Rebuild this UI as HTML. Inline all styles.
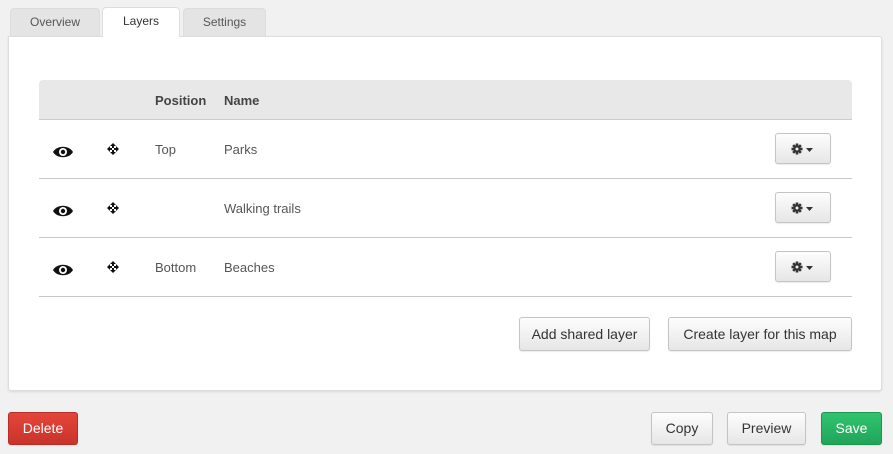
<!DOCTYPE html>
<html><head><style>
*{box-sizing:border-box;margin:0;padding:0}
body{width:893px;height:454px;background:#f1f1f1;font-family:"Liberation Sans",sans-serif;font-size:13px;color:#555;position:relative;overflow:hidden}
.abs{position:absolute}
.tab{position:absolute;top:8px;height:28px;background:#e4e4e4;border:1px solid #ddd;border-bottom:none;border-radius:4px 4px 0 0;text-align:center;line-height:27px;font-size:12px;color:#555}
.panel{position:absolute;left:8px;top:36px;width:874px;height:355px;background:#fff;border:1px solid #ddd;border-radius:0 3px 3px 3px;box-shadow:0 1px 2px rgba(0,0,0,.1)}
.th{position:absolute;left:39px;top:80px;width:813px;height:40px;background:#e8e8e8;border-radius:4px 4px 0 0;border-bottom:1px solid #ccc;font-weight:bold;color:#444}
.row{position:absolute;left:39px;width:813px;height:59px;border-bottom:1px solid #c8c8c8}
.btn{position:absolute;background:linear-gradient(#fdfdfd,#e6e6e6);border:1px solid #c4c4c4;border-radius:3px;text-align:center;color:#333;font-size:14px;box-shadow:0 1px 1px rgba(0,0,0,.08)}
</style></head><body>
<div class="tab" style="left:10px;width:90px">Overview</div>
<div class="tab" style="left:102px;width:78px;top:7px;height:30px;background:#fff;z-index:2;color:#333">Layers</div>
<div class="tab" style="left:183px;width:83px">Settings</div>
<div class="panel"></div>
<div class="th"><span class="abs" style="left:116px;top:13px">Position</span><span class="abs" style="left:185px;top:13px">Name</span></div>

<svg width="0" height="0" style="position:absolute"><defs>
<g id="eye"><path d="M1 7C5 0 17 0 21 7C17 14 5 14 1 7Z" fill="#111"/><circle cx="11" cy="7" r="4" fill="#fff"/><circle cx="11" cy="7" r="2.2" fill="#111"/></g>
<g id="mv" fill="#111"><path d="M6 0L9 3H7V5H5V3H3Z"/><path d="M6 12L9 9H7V7H5V9H3Z"/><path d="M0 6L3 3V5H5V7H3V9Z"/><path d="M12 6L9 3V5H7V7H9V9Z"/></g>
<g id="gb"><g fill="#333" transform="translate(6,6)"><circle r="3.6"/><rect x="-1.3" y="-5.5" width="2.6" height="11"/><rect x="-1.3" y="-5.5" width="2.6" height="11" transform="rotate(45)"/><rect x="-1.3" y="-5.5" width="2.6" height="11" transform="rotate(90)"/><rect x="-1.3" y="-5.5" width="2.6" height="11" transform="rotate(135)"/></g><circle cx="6" cy="6" r="1.5" fill="#eee"/><path d="M15 5H22L18.5 9Z" fill="#333"/></g>
</defs></svg>

<div class="row" style="top:120px">
<svg class="abs" style="left:13px;top:25px" width="22" height="14"><use href="#eye"/></svg>
<svg class="abs" style="left:68px;top:23px" width="12" height="12"><use href="#mv"/></svg>
<span class="abs" style="left:116px;top:22px">Top</span><span class="abs" style="left:185px;top:22px">Parks</span>
<div class="btn" style="left:736px;top:13px;width:56px;height:31px"><svg class="abs" style="left:15px;top:9px" width="24" height="12"><use href="#gb"/></svg></div></div>

<div class="row" style="top:179px">
<svg class="abs" style="left:13px;top:25px" width="22" height="14"><use href="#eye"/></svg>
<svg class="abs" style="left:68px;top:23px" width="12" height="12"><use href="#mv"/></svg>
<span class="abs" style="left:185px;top:22px">Walking trails</span>
<div class="btn" style="left:736px;top:13px;width:56px;height:31px"><svg class="abs" style="left:15px;top:9px" width="24" height="12"><use href="#gb"/></svg></div></div>

<div class="row" style="top:238px">
<svg class="abs" style="left:13px;top:25px" width="22" height="14"><use href="#eye"/></svg>
<svg class="abs" style="left:68px;top:23px" width="12" height="12"><use href="#mv"/></svg>
<span class="abs" style="left:116px;top:22px">Bottom</span><span class="abs" style="left:185px;top:22px">Beaches</span>
<div class="btn" style="left:736px;top:13px;width:56px;height:31px"><svg class="abs" style="left:15px;top:9px" width="24" height="12"><use href="#gb"/></svg></div></div>

<div class="btn" style="left:519px;top:317px;width:131px;height:34px;line-height:32px">Add shared layer</div>
<div class="btn" style="left:668px;top:317px;width:184px;height:34px;line-height:32px">Create layer for this map</div>

<div class="btn" style="left:8px;top:412px;width:70px;height:33px;line-height:31px;background:linear-gradient(#e5453a,#c8342b);border-color:#b52f27;color:#fff">Delete</div>
<div class="btn" style="left:651px;top:412px;width:62px;height:33px;line-height:31px">Copy</div>
<div class="btn" style="left:727px;top:412px;width:79px;height:33px;line-height:31px">Preview</div>
<div class="btn" style="left:821px;top:412px;width:61px;height:33px;line-height:31px;background:linear-gradient(#2fc46f,#22a45a);border-color:#1f9552;color:#fff">Save</div>
</body></html>
